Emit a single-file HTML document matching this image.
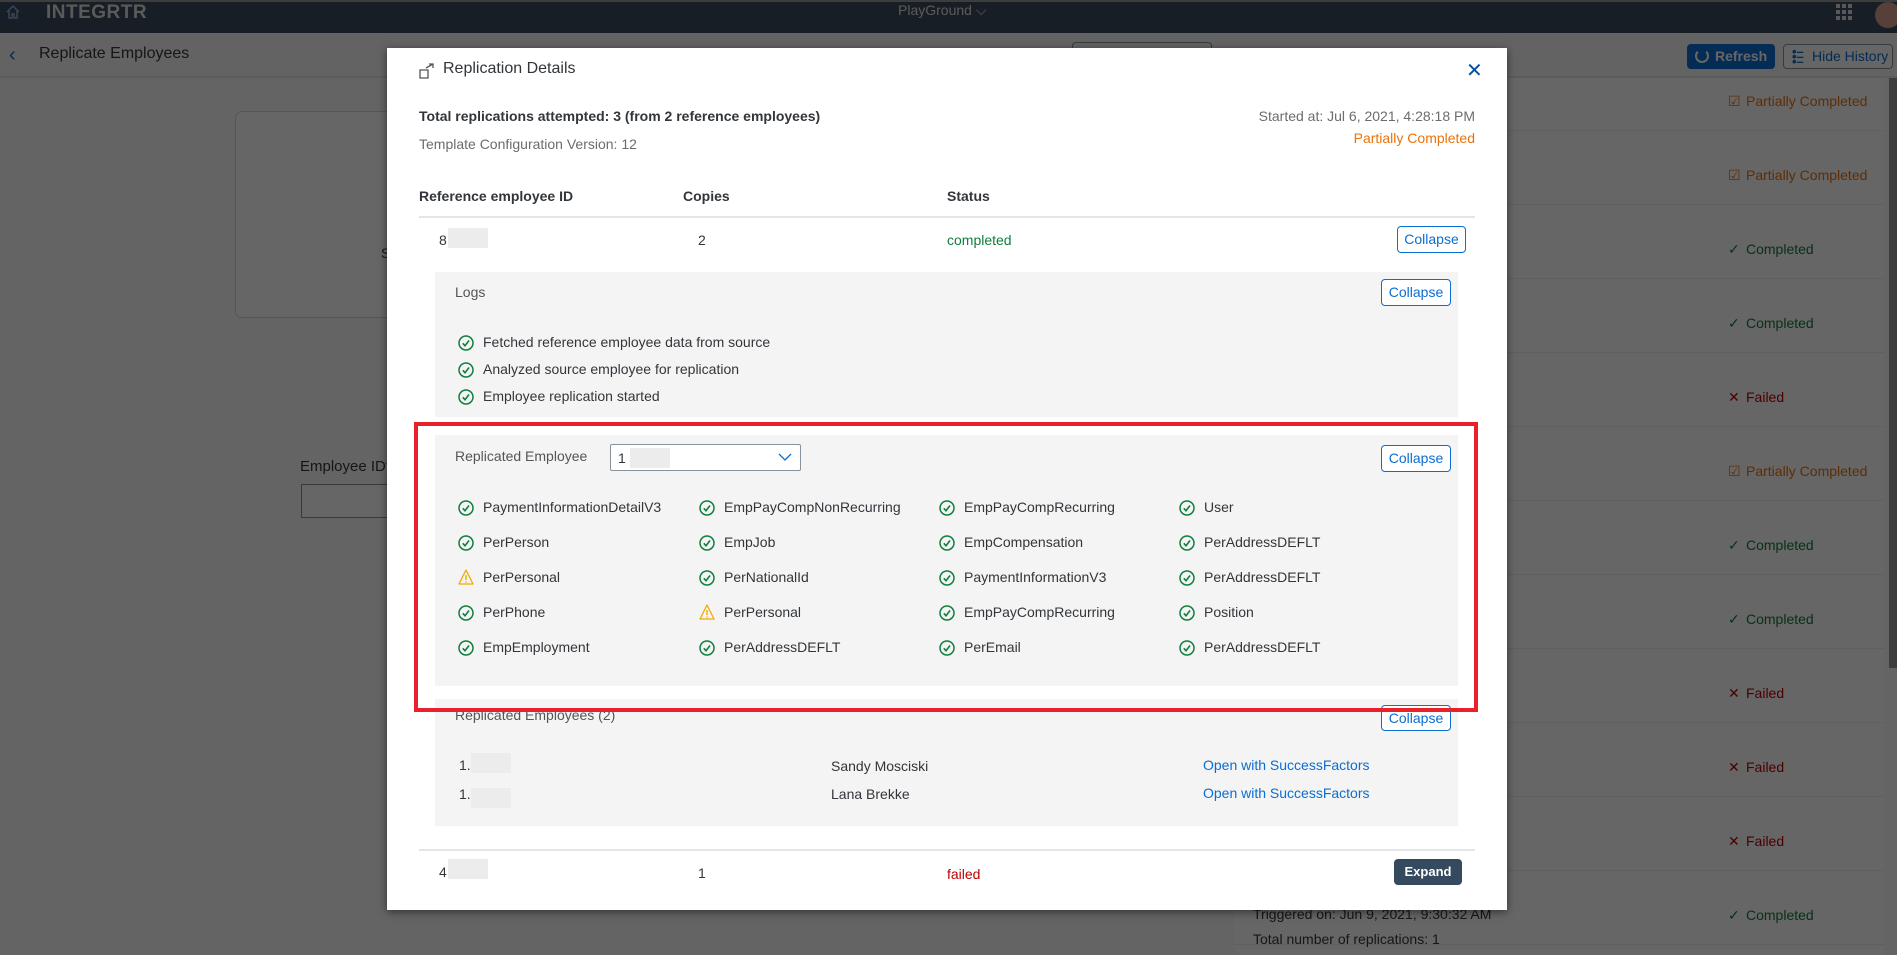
<!DOCTYPE html>
<html><head><meta charset="utf-8"><style>
*{box-sizing:border-box;margin:0;padding:0}
html,body{width:1897px;height:955px;overflow:hidden;background:#676767}
body{font-family:"Liberation Sans",sans-serif;position:relative;color:#32363a}
.a{position:absolute;white-space:nowrap}
.t{font-size:14px;color:#32363a}
.btn{border:1px solid #0a6ed1;border-radius:4px;color:#0a6ed1;font-size:14px;background:#fff;text-align:center;line-height:25px}
.panel{background:#f4f4f4}
.ci{width:16px;height:16px}
.gr{color:#107e3e}
.blank{background:#ececec}
#bg{position:absolute;left:0;top:0;width:1897px;height:955px;filter:brightness(0.4)}
</style></head><body>
<div id="bg">
<svg class="a" style="left:0;top:0" width="1897" height="955"><rect width="1897" height="955" fill="#fafafa"/><rect y="33" width="1897" height="45" fill="#f7f7f7"/><rect x="1234" y="78" width="650" height="877" fill="#ffffff"/></svg>
<div class="a" style="left:0;top:0;width:1897px;height:33px;background:#3c4b5e;border-top:2px solid #999"></div>
<svg class="a" style="left:5px;top:4px" width="16" height="16" viewBox="0 0 16 16"><path d="M2 8L8 2l6 6M4 7v7h3v-4h2v4h3V7" fill="none" stroke="#8ab4e0" stroke-width="1.4"/></svg>
<div class="a" style="left:46px;top:2px;font-size:19px;font-weight:bold;color:#e0e0e0;letter-spacing:.5px">INTEGRTR</div>
<div class="a" style="left:898px;top:2px;font-size:14px;color:#e0e0e0">PlayGround ⌵</div>
<svg class="a" style="left:1836px;top:4px" width="16" height="16"><g fill="#ddd"><rect x="0" y="0" width="4" height="4"/><rect x="6" y="0" width="4" height="4"/><rect x="12" y="0" width="4" height="4"/><rect x="0" y="6" width="4" height="4"/><rect x="6" y="6" width="4" height="4"/><rect x="12" y="6" width="4" height="4"/><rect x="0" y="12" width="4" height="4"/><rect x="6" y="12" width="4" height="4"/><rect x="12" y="12" width="4" height="4"/></g></svg>
<div class="a" style="left:1875px;top:2px;width:26px;height:26px;border-radius:13px;background:#d9a090"></div>
<div class="a" style="left:0;top:76px;width:1897px;height:2px;background:#e5e5e5"></div>
<div class="a" style="left:9px;top:44px;font-size:20px;color:#0a6ed1">‹</div>
<div class="a" style="left:39px;top:45px;font-size:16px;color:#32363a">Replicate Employees</div>
<div class="a" style="left:1072px;top:42px;width:140px;height:12px;border:1px solid #89919a;border-bottom:none;border-radius:4px 4px 0 0"></div>
<div class="a" style="left:1687px;top:44px;width:88px;height:25px;background:#0a6ed1;border-radius:4px;color:#fff;font-weight:bold;font-size:14px;line-height:25px;padding-left:28px">Refresh</div>
<div class="a" style="left:1695px;top:49px;width:14px;height:14px;border:2px solid #fff;border-radius:50%;border-top-color:transparent"></div>
<div class="a" style="left:1783px;top:44px;width:110px;height:25px;border:1px solid #89919a;border-radius:4px;color:#0a6ed1;font-size:14px;line-height:23px;padding-left:28px;background:#fff">Hide History</div>
<div class="a" style="left:1792px;top:49px;font-size:13px;color:#0a6ed1;line-height:5px;font-weight:bold">•–<br>•–<br>•–</div>
<div class="a" style="left:235px;top:111px;width:160px;height:207px;border:1px solid #d0d8e0;border-radius:7px;background:#fff"></div>
<div class="a" style="left:381px;top:245px;font-size:14px;color:#32363a">S</div>
<div class="a" style="left:300px;top:458px;font-size:15px;color:#32363a">Employee ID<span style="color:#bb0000">*</span></div>
<div class="a" style="left:301px;top:484px;width:100px;height:34px;border:1px solid #89919a;background:#fff"></div>
<div class="a" style="left:1889px;top:78px;width:8px;height:590px;background:#999"></div>
<div id="rl"></div>
<div class="a" style="left:1253px;top:906px;font-size:14px;color:#32363a">Triggered on: Jun 9, 2021, 9:30:32 AM</div>
<div class="a" style="left:1253px;top:931px;font-size:14px;color:#32363a">Total number of replications: 1</div>
</div>
<div class="a" style="left:387px;top:48px;width:1120px;height:862px;background:#fff;box-shadow:0 2px 8px rgba(0,0,0,.5)"></div>
<svg class="a" style="left:419px;top:63px" width="16" height="16" viewBox="0 0 16 16"><path d="M1 7h8v8H1zM7 5l7-4M10 1h4v4" fill="none" stroke="#555" stroke-width="1.3"/></svg>
<div class="a" style="left:443px;top:60px;font-size:16px;color:#32363a">Replication Details</div>
<div class="a" style="left:1466px;top:58px;font-size:20px;color:#0a4fa0">✕</div>
<div class="a t" style="left:419px;top:108px;font-weight:bold">Total replications attempted: 3 (from 2 reference employees)</div>
<div class="a t" style="left:419px;top:136px;color:#6a6d70">Template Configuration Version: 12</div>
<div class="a t" style="left:1257px;top:108px;width:218px;text-align:right;color:#6a6d70">Started at: Jul 6, 2021, 4:28:18 PM</div>
<div class="a t" style="left:1257px;top:130px;width:218px;text-align:right;color:#e9730c">Partially Completed</div>
<div class="a t" style="left:419px;top:188px;font-weight:bold">Reference employee ID</div>
<div class="a t" style="left:683px;top:188px;font-weight:bold">Copies</div>
<div class="a t" style="left:947px;top:188px;font-weight:bold">Status</div>
<div class="a" style="left:419px;top:216px;width:1056px;height:2px;background:#e5e5e5"></div>
<div class="a t" style="left:439px;top:232px">8</div><div class="a blank" style="left:448px;top:228px;width:40px;height:20px"></div>
<div class="a t" style="left:698px;top:232px">2</div>
<div class="a t gr" style="left:947px;top:232px">completed</div>
<div class="a btn" style="left:1397px;top:226px;width:69px;height:27px">Collapse</div>
<div class="a panel" style="left:435px;top:272px;width:1023px;height:145px"></div>
<div class="a t" style="left:455px;top:284px;color:#555">Logs</div>
<div class="a btn" style="left:1381px;top:279px;width:70px;height:27px">Collapse</div>
<div id="logs"></div>
<div class="a panel" style="left:435px;top:435px;width:1023px;height:251px"></div>
<div class="a t" style="left:455px;top:448px;color:#555">Replicated Employee</div>
<div class="a" style="left:610px;top:444px;width:191px;height:27px;border:1px solid #89919a;background:#fff;border-radius:2px"></div>
<div class="a t" style="left:618px;top:450px">1</div><div class="a blank" style="left:630px;top:448px;width:40px;height:20px"></div>
<svg class="a" style="left:778px;top:453px" width="14" height="9"><path d="M1 1l6 6 6-6" fill="none" stroke="#0a6ed1" stroke-width="1.3"/></svg>
<div class="a btn" style="left:1381px;top:445px;width:70px;height:27px">Collapse</div>
<div id="grid"></div>
<div class="a panel" style="left:435px;top:699px;width:1023px;height:127px"></div>
<div class="a t" style="left:455px;top:707px;color:#555">Replicated Employees (2)</div>
<div class="a btn" style="left:1381px;top:705px;width:70px;height:26px">Collapse</div>
<div class="a t" style="left:459px;top:757px">1.</div><div class="a blank" style="left:471px;top:753px;width:40px;height:20px"></div>
<div class="a t" style="left:459px;top:786px">1.</div><div class="a blank" style="left:471px;top:788px;width:40px;height:20px"></div>
<div class="a t" style="left:831px;top:758px">Sandy Mosciski</div>
<div class="a t" style="left:831px;top:786px">Lana Brekke</div>
<div class="a t" style="left:1203px;top:757px;color:#0a6ed1">Open with SuccessFactors</div>
<div class="a t" style="left:1203px;top:785px;color:#0a6ed1">Open with SuccessFactors</div>
<div class="a" style="left:419px;top:849px;width:1056px;height:2px;background:#e5e5e5"></div>
<div class="a t" style="left:439px;top:864px">4</div><div class="a blank" style="left:448px;top:859px;width:40px;height:20px"></div>
<div class="a t" style="left:698px;top:865px">1</div>
<div class="a t" style="left:947px;top:866px;color:#bb0000">failed</div>
<div class="a" style="left:1394px;top:859px;width:68px;height:26px;background:#354a5f;border-radius:4px;color:#fff;font-size:13px;font-weight:bold;text-align:center;line-height:26px">Expand</div>
<div class="a" style="left:414px;top:422px;width:1064px;height:290px;border:4px solid #e8212b"></div>
<script>
var s=[["p","Partially Completed"],["p","Partially Completed"],["c","Completed"],["c","Completed"],["f","Failed"],["p","Partially Completed"],["c","Completed"],["c","Completed"],["f","Failed"],["f","Failed"],["f","Failed"],["c","Completed"]];
var h="";s.forEach(function(x,i){var y=93+i*74;var col=x[0]=="p"?"#e9730c":x[0]=="c"?"#107e3e":"#bb0000";var ic=x[0]=="p"?"☑":x[0]=="c"?"✓":"✕";
h+='<div class="a" style="left:1234px;top:'+(y+37)+'px;width:650px;height:1px;background:#eee"></div>';
h+='<div class="a" style="left:1728px;top:'+y+'px;font-size:14px;color:'+col+'"><span style="display:inline-block;width:18px">'+ic+'</span>'+x[1]+'</div>';});
document.getElementById("rl").innerHTML=h;
function ck(x,y){return '<svg class="a ci" style="left:'+x+'px;top:'+y+'px" viewBox="0 0 16 16"><circle cx="8" cy="8" r="7" fill="none" stroke="#107e3e" stroke-width="1.5"/><path d="M4.8 8.3l2.2 2.4 4-5.2" fill="none" stroke="#107e3e" stroke-width="1.6"/></svg>';}
function wn(x,y){return '<svg class="a ci" style="left:'+x+'px;top:'+y+'px" viewBox="0 0 16 16"><path d="M8 1L15 15H1z" fill="none" stroke="#f0ab00" stroke-width="1.3" stroke-linejoin="round"/><path d="M8 6v5M8 12.5v1.2" stroke="#f0ab00" stroke-width="1.4"/></svg>';}
var l=["Fetched reference employee data from source","Analyzed source employee for replication","Employee replication started"];h="";
l.forEach(function(t,i){var y=334+i*27;h+=ck(458,y+1)+'<div class="a t" style="left:483px;top:'+y+'px">'+t+'</div>';});
document.getElementById("logs").innerHTML=h;
var g=[["PaymentInformationDetailV3","EmpPayCompNonRecurring","EmpPayCompRecurring","User"],["PerPerson","EmpJob","EmpCompensation","PerAddressDEFLT"],["!PerPersonal","PerNationalId","PaymentInformationV3","PerAddressDEFLT"],["PerPhone","!PerPersonal","EmpPayCompRecurring","Position"],["EmpEmployment","PerAddressDEFLT","PerEmail","PerAddressDEFLT"]];
var cx=[458,699,939,1179];h="";
g.forEach(function(r,i){var y=499+i*35;r.forEach(function(t,j){var w=t[0]=="!";if(w)t=t.slice(1);h+=(w?wn(cx[j],y):ck(cx[j],y+1))+'<div class="a t" style="left:'+(cx[j]+25)+'px;top:'+y+'px">'+t+'</div>';});});
document.getElementById("grid").innerHTML=h;
</script>
</body></html>
